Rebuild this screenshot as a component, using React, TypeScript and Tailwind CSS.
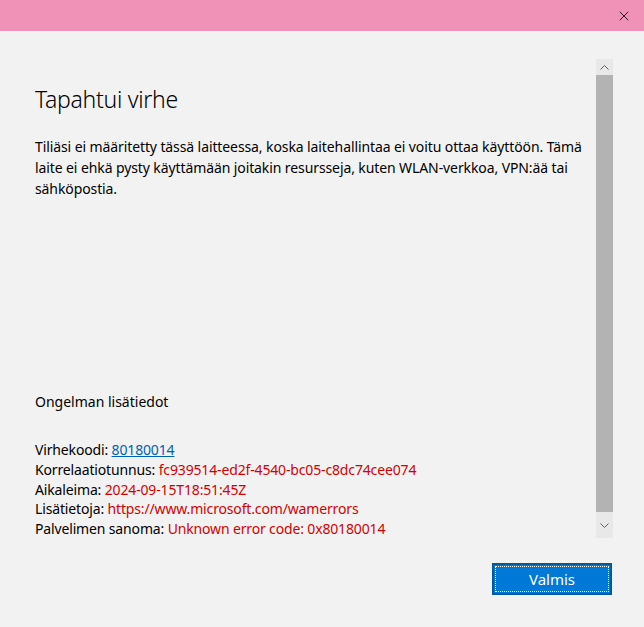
import { X } from "lucide-react";

const details = [
  { label: "Korrelaatiotunnus:", value: "fc939514-ed2f-4540-bc05-c8dc74cee074" },
  { label: "Aikaleima:", value: "2024-09-15T18:51:45Z" },
  { label: "Lisätietoja:", value: "https://www.microsoft.com/wamerrors" },
  { label: "Palvelimen sanoma:", value: "Unknown error code: 0x80180014" },
];

export default function App() {
  return (
    <div
      className="w-[644px] h-[627px] bg-[#f2f2f2] flex flex-col text-[#000] overflow-hidden"
      style={{ fontFamily: '"Noto Sans", "Open Sans", sans-serif' }}
    >
      {/* title bar */}
      <div className="h-[31px] bg-[#f091b8] flex justify-end items-center">
        <div className="w-[40px] h-[31px] flex items-center justify-center">
          <X size={16} strokeWidth={1.2} className="text-black" />
        </div>
      </div>

      <div className="flex pt-[28px] h-[507px]">
        <div className="flex-1 pl-[35px] pr-[10px] flex flex-col">
          <h1 className="text-[23px] leading-[32px] mt-[24px] font-light tracking-[-0.3px]">Tapahtui virhe</h1>
          <p className="text-[14px] leading-[21px] mt-[21px] tracking-[-0.1px]">
            Tiliäsi ei määritetty tässä laitteessa, koska laitehallintaa ei voitu ottaa käyttöön. Tämä laite ei ehkä pysty käyttämään joitakin resursseja, kuten WLAN-verkkoa, VPN:ää tai sähköpostia.
          </p>
          <div className="flex-1" />
          <p className="text-[14px] leading-[20px] mb-[28px]">Ongelman lisätiedot</p>
          <div className="text-[14px] leading-[19.8px] mb-[-1px] tracking-[-0.15px]">
            <div>
              Virhekoodi: <span className="text-[#0063b1] underline">80180014</span>
            </div>
            {details.map((d) => (
              <div key={d.label}>
                {d.label} <span className="text-[#d60000]">{d.value}</span>
              </div>
            ))}
          </div>
        </div>

        {/* scrollbar */}
        <div className="w-[17px] h-[479px] mr-[31px] flex flex-col bg-[#e8e8e8]">
          <div className="h-[16px] flex items-center justify-center text-[#606060]">
            <svg width="9" height="5" viewBox="0 0 9 5">
              <path d="M0.5 4.5 L4.5 0.5 L8.5 4.5" fill="none" stroke="currentColor" strokeWidth="1" />
            </svg>
          </div>
          <div className="flex-1 bg-[#b3b3b3]" />
          <div className="h-[26px] flex items-center justify-center text-[#606060]">
            <svg width="9" height="5" viewBox="0 0 9 5">
              <path d="M0.5 0.5 L4.5 4.5 L8.5 0.5" fill="none" stroke="currentColor" strokeWidth="1" />
            </svg>
          </div>
        </div>
      </div>

      <div className="flex justify-end pr-[32px] pt-[25px]">
        <button className="w-[120px] h-[32px] bg-[#0078d7] border-2 border-[#005a9e] p-[1px]">
          <div className="w-full h-full border border-dotted border-white flex items-center justify-center text-white text-[15px]">
            Valmis
          </div>
        </button>
      </div>
    </div>
  );
}
